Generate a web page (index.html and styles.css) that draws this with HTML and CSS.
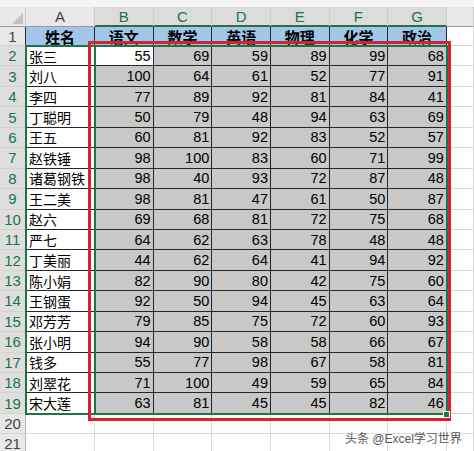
FILE: index.html
```html
<!DOCTYPE html>
<html lang="zh">
<head>
<meta charset="utf-8">
<title>成绩表</title>
<link rel="stylesheet" href="styles.css">
</head>
<body>
<div class="app">
  <div class="strip"></div>
  <div class="sheet">
    <div class="ch corner"><span class="tri"></span></div><div class="ch">A</div><div class="ch s">B</div><div class="ch s">C</div><div class="ch s">D</div><div class="ch s">E</div><div class="ch s">F</div><div class="ch s">G</div><div class="ch"></div>

    <div class="rh t1">1</div><div class="c t hd">姓名</div><div class="c t hd">语文</div><div class="c t hd">数学</div><div class="c t hd">英语</div><div class="c t hd">物理</div><div class="c t hd">化学</div><div class="c t hd">政治</div><div class="c"></div>

    <div class="rh s">2</div><div class="c t nm">张三</div><div class="c t n w">55</div><div class="c t n">69</div><div class="c t n">59</div><div class="c t n">89</div><div class="c t n">99</div><div class="c t n">68</div><div class="c"></div>
    <div class="rh s">3</div><div class="c t nm">刘八</div><div class="c t n">100</div><div class="c t n">64</div><div class="c t n">61</div><div class="c t n">52</div><div class="c t n">77</div><div class="c t n">91</div><div class="c"></div>
    <div class="rh s">4</div><div class="c t nm">李四</div><div class="c t n">77</div><div class="c t n">89</div><div class="c t n">92</div><div class="c t n">81</div><div class="c t n">84</div><div class="c t n">41</div><div class="c"></div>
    <div class="rh s">5</div><div class="c t nm">丁聪明</div><div class="c t n">50</div><div class="c t n">79</div><div class="c t n">48</div><div class="c t n">94</div><div class="c t n">63</div><div class="c t n">69</div><div class="c"></div>
    <div class="rh s">6</div><div class="c t nm">王五</div><div class="c t n">60</div><div class="c t n">81</div><div class="c t n">92</div><div class="c t n">83</div><div class="c t n">52</div><div class="c t n">57</div><div class="c"></div>
    <div class="rh s">7</div><div class="c t nm">赵铁锤</div><div class="c t n">98</div><div class="c t n">100</div><div class="c t n">83</div><div class="c t n">60</div><div class="c t n">71</div><div class="c t n">99</div><div class="c"></div>
    <div class="rh s">8</div><div class="c t nm">诸葛钢铁</div><div class="c t n">98</div><div class="c t n">40</div><div class="c t n">93</div><div class="c t n">72</div><div class="c t n">87</div><div class="c t n">48</div><div class="c"></div>
    <div class="rh s">9</div><div class="c t nm">王二美</div><div class="c t n">98</div><div class="c t n">81</div><div class="c t n">47</div><div class="c t n">61</div><div class="c t n">50</div><div class="c t n">87</div><div class="c"></div>
    <div class="rh s">10</div><div class="c t nm">赵六</div><div class="c t n">69</div><div class="c t n">68</div><div class="c t n">81</div><div class="c t n">72</div><div class="c t n">75</div><div class="c t n">68</div><div class="c"></div>
    <div class="rh s">11</div><div class="c t nm">严七</div><div class="c t n">64</div><div class="c t n">62</div><div class="c t n">63</div><div class="c t n">78</div><div class="c t n">48</div><div class="c t n">48</div><div class="c"></div>
    <div class="rh s">12</div><div class="c t nm">丁美丽</div><div class="c t n">44</div><div class="c t n">62</div><div class="c t n">64</div><div class="c t n">41</div><div class="c t n">94</div><div class="c t n">92</div><div class="c"></div>
    <div class="rh s">13</div><div class="c t nm">陈小娟</div><div class="c t n">82</div><div class="c t n">90</div><div class="c t n">80</div><div class="c t n">42</div><div class="c t n">75</div><div class="c t n">60</div><div class="c"></div>
    <div class="rh s">14</div><div class="c t nm">王钢蛋</div><div class="c t n">92</div><div class="c t n">50</div><div class="c t n">94</div><div class="c t n">45</div><div class="c t n">63</div><div class="c t n">64</div><div class="c"></div>
    <div class="rh s">15</div><div class="c t nm">邓芳芳</div><div class="c t n">79</div><div class="c t n">85</div><div class="c t n">75</div><div class="c t n">72</div><div class="c t n">60</div><div class="c t n">93</div><div class="c"></div>
    <div class="rh s">16</div><div class="c t nm">张小明</div><div class="c t n">94</div><div class="c t n">90</div><div class="c t n">58</div><div class="c t n">58</div><div class="c t n">66</div><div class="c t n">67</div><div class="c"></div>
    <div class="rh s">17</div><div class="c t nm">钱多</div><div class="c t n">55</div><div class="c t n">77</div><div class="c t n">98</div><div class="c t n">67</div><div class="c t n">58</div><div class="c t n">81</div><div class="c"></div>
    <div class="rh s">18</div><div class="c t nm">刘翠花</div><div class="c t n">71</div><div class="c t n">100</div><div class="c t n">49</div><div class="c t n">59</div><div class="c t n">65</div><div class="c t n">84</div><div class="c"></div>
    <div class="rh s">19</div><div class="c t nm">宋大莲</div><div class="c t n">63</div><div class="c t n">81</div><div class="c t n">45</div><div class="c t n">45</div><div class="c t n">82</div><div class="c t n">46</div><div class="c"></div>

    <div class="rh">20</div><div class="c"></div><div class="c"></div><div class="c"></div><div class="c"></div><div class="c"></div><div class="c"></div><div class="c"></div><div class="c"></div>
    <div class="rh">21</div><div class="c"></div><div class="c"></div><div class="c"></div><div class="c"></div><div class="c"></div><div class="c"></div><div class="c"></div><div class="c"></div>
  </div>

  <div class="selbox sel-a"></div>
  <div class="selbox sel-b"></div>
  <div class="redbox"></div>
  <div class="handle"></div>
  <div class="mark">头条 @Excel学习世界</div>
</div>
</body>
</html>
```

FILE: styles.css
```css
* {
  box-sizing: border-box;
}

body {
  margin: 0;
  background: #ffffff;
  font-family: "Liberation Sans", "Noto Sans CJK SC", sans-serif;
}

.app {
  position: relative;
  width: 474px;
  height: 451px;
  overflow: hidden;
  background: #ffffff;
}

.strip {
  height: 7px;
  background: #f4f4f4;
}

.sheet {
  display: grid;
  grid-template-columns: 26px 69px repeat(6, 58.67px) 1fr;
  grid-template-rows: 20px 19px repeat(18, 20.44px) 20px 20px;
}

.ch {
  background: #e8e8e8;
  border-right: 1px solid #cbcbcb;
  border-bottom: 1px solid #9a9a9a;
  display: flex;
  align-items: center;
  justify-content: center;
  font-size: 15px;
  color: #444444;
}

.ch.s {
  background: #dcdcdc;
  color: #217346;
  border-bottom: 2px solid #217346;
}

.corner {
  position: relative;
}

.tri {
  position: absolute;
  right: 2px;
  bottom: 2px;
  width: 0;
  height: 0;
  border-left: 11px solid transparent;
  border-bottom: 11px solid #c2c2c2;
}

.rh {
  background: #e8e8e8;
  border-right: 1px solid #b8b8b8;
  border-bottom: 1px solid #d2d2d2;
  display: flex;
  align-items: center;
  justify-content: center;
  font-size: 15px;
  color: #444444;
}

.rh.t1 {
  border-right-color: #2a2a2a;
}

.rh.s {
  background: #dedede;
  color: #217346;
  border-right: 1px solid #217346;
}

.c {
  border-right: 1px solid #d9d9d9;
  border-bottom: 1px solid #d9d9d9;
  display: flex;
  align-items: center;
  padding: 0 3px;
  font-size: 14px;
  color: #000000;
  white-space: nowrap;
  overflow: hidden;
}

.c.t {
  border-color: #262626;
}

.hd {
  background: #a1c6e9;
  font-weight: bold;
  font-size: 15px;
  justify-content: center;
}

.nm {
  background: #ffffff;
}

.n {
  background: #c8c8c8;
  justify-content: flex-end;
  padding-right: 2px;
  font-size: 14.5px;
}

.n.w {
  background: #ffffff;
}

.selbox {
  position: absolute;
  border: 2px solid #217346;
  pointer-events: none;
}

.sel-a {
  left: 25px;
  top: 45px;
  width: 71px;
  height: 370px;
}

.sel-b {
  left: 94px;
  top: 45px;
  width: 354px;
  height: 370px;
}

.redbox {
  position: absolute;
  left: 88px;
  top: 41px;
  width: 363px;
  height: 380px;
  border: 3px solid #d3232e;
}

.handle {
  position: absolute;
  left: 443px;
  top: 411px;
  width: 7px;
  height: 7px;
  background: #217346;
  border: 1px solid #ffffff;
}

.mark {
  position: absolute;
  left: 345px;
  top: 429px;
  font-size: 12px;
  color: #555555;
  white-space: nowrap;
  text-shadow: 0 0 2px #ffffff, 0 0 2px #ffffff;
}
```
